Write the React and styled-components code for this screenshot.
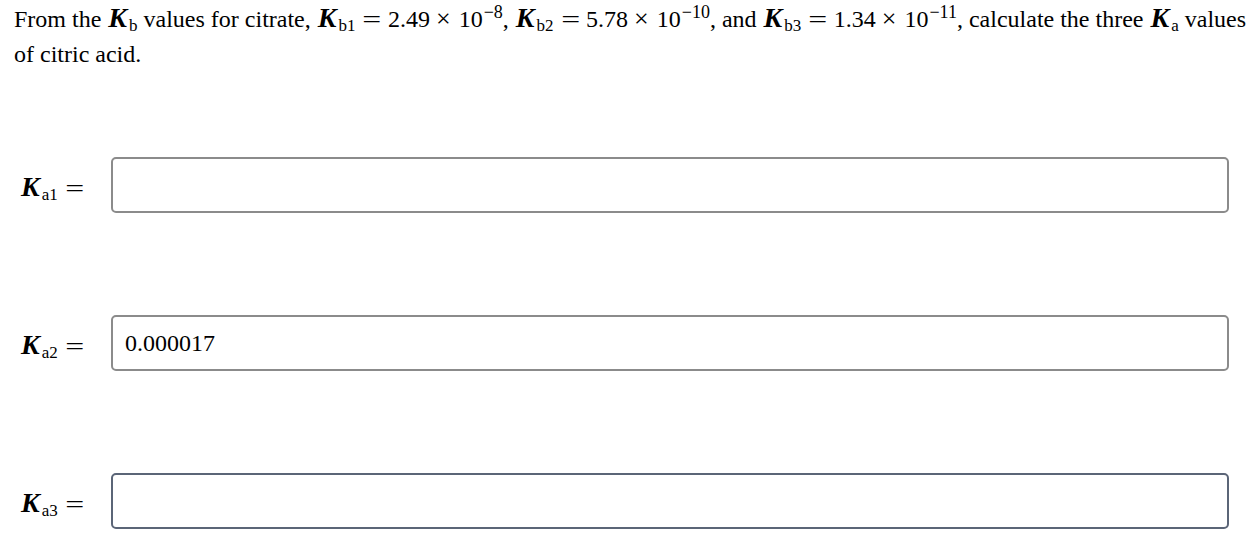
import styled, { createGlobalStyle } from 'styled-components';

const GlobalStyle = createGlobalStyle`
    body {
        margin: 0;
        background: #fff;
        color: #000;
        font-family: "Liberation Serif", "Times New Roman", serif;
    }
`;

const Page = styled.div`
    padding: 2px 0 0 14px;
`;

const Prompt = styled.p`
    margin: 0;
    padding-right: 4px;
    font-size: 24px;
    line-height: 35px;
`;

const K = styled.span`
    font-style: italic;
    font-weight: bold;
    font-size: 28px;
    line-height: 0;
    margin-left: 1px;
`;

const Sub = styled.sub`
    font-size: 17px;
    line-height: 0;
    vertical-align: -4px;
    margin-left: 2px;
    font-style: normal;
    font-weight: normal;
`;

const Sup = styled.sup`
    font-size: 18px;
    line-height: 0;
    vertical-align: 9px;
    margin-left: 1px;
`;

/* relation and binary operators get TeX-like spacing */
const Rel = styled.span`
    display: inline-block;
    line-height: 0;
    transform: scaleX(1.4);
    margin: 0 9px 0 10px;
`;

const Bin = styled.span`
    font-size: 26px;
    line-height: 0;
    margin: 0 8px 0 6px;
`;

const Answers = styled.div`
    display: flex;
    flex-direction: column;
    gap: 102px;
    margin-top: 85px;
    padding-right: 29px;
`;

const Row = styled.div`
    display: flex;
    align-items: center;
`;

const Label = styled.label`
    width: 91px;
    padding-left: 6px;
    flex-shrink: 0;
    font-size: 24px;
    padding-top: 6px;
`;

const Field = styled.input`
    flex: 1;
    height: 56px;
    box-sizing: border-box;
    border: 2px solid ${(p) => (p.$active ? '#5b6577' : '#8b8b8b')};
    border-radius: 5px;
    padding: 0 12px;
    font-family: "Liberation Serif", "Times New Roman", serif;
    font-size: 24px;
    color: #000;
    background: #fff;
    outline: none;
`;

function KSym({ sub }) {
    return (
        <K>
            K<Sub>{sub}</Sub>
        </K>
    );
}

function Power({ exp }) {
    return (
        <>
            10<Sup>{exp}</Sup>
        </>
    );
}

function AnswerRow({ sub, value, active }) {
    return (
        <Row>
            <Label>
                <KSym sub={sub} />
                <Rel>=</Rel>
            </Label>
            <Field type="text" defaultValue={value} $active={active} />
        </Row>
    );
}

export default function App() {
    return (
        <>
            <GlobalStyle />
            <Page>
                <Prompt>
                    From the <KSym sub="b" /> values for citrate, <KSym sub="b1" />
                    <Rel>=</Rel>2.49<Bin>×</Bin><Power exp="−8" />, <KSym sub="b2" />
                    <Rel>=</Rel>5.78<Bin>×</Bin><Power exp="−10" />, and <KSym sub="b3" />
                    <Rel>=</Rel>1.34<Bin>×</Bin><Power exp="−11" />, calculate the three <KSym sub="a" /> values
                    of citric acid.
                </Prompt>
                <Answers>
                    <AnswerRow sub="a1" value="" />
                    <AnswerRow sub="a2" value="0.000017" />
                    <AnswerRow sub="a3" value="" active />
                </Answers>
            </Page>
        </>
    );
}
